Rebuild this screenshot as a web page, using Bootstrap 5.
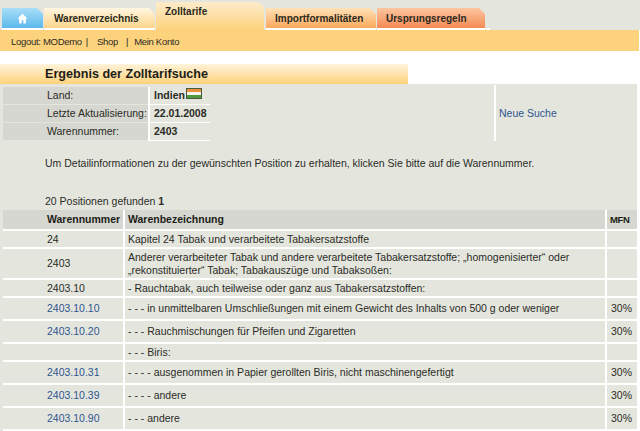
<!DOCTYPE html>
<html lang="de">
<head>
  <meta charset="UTF-8" />
  <meta name="viewport" content="width=device-width, initial-scale=1.0"/>
  <title>Ergebnis der Zolltarifsuche</title>
  <link href="https://cdn.jsdelivr.net/npm/bootstrap@5.3.3/dist/css/bootstrap.min.css" rel="stylesheet" />
  <style>
    html, body { height: 431px; overflow: hidden; }
    body {
      font-family: "Liberation Sans", Arial, sans-serif;
      font-size: 10.5px;
      line-height: 13px;
      color: #2b2b26;
      background-color: #fff;
    }
    a { color: #2f5590; text-decoration: none; }
    .top-area { background: #e4e6de; height: 30px; padding-left: 2px; }
    .tab-item {
      height: 22px;
      border-bottom: 2px solid #fff;
      font-weight: 700;
      font-size: 10px;
      color: #2a2a20;
      display: flex;
      align-items: center;
      padding-left: 9px;
      margin-right: 1px;
      clip-path: polygon(0 0, calc(100% - 6px) 0, 100% 6px, 100% 100%, 0 100%);
    }
    .tab-home { width: 41px; padding: 0; justify-content: center; background: linear-gradient(#a9def8, #5cb9ec); }
    .tab-waren { width: 111px; padding-left: 10px; background: linear-gradient(#fff6e2, #fdd58a); }
    .tab-zoll {
      width: 108px;
      height: 28px;
      margin-right: 2px;
      border: 0;
      align-items: flex-start;
      padding: 3px 0 0 9px;
      background: linear-gradient(#fdeccb, #fdd27c);
      clip-path: none;
      border-top-right-radius: 8px;
    }
    .tab-import { width: 110px; background: linear-gradient(#fee2b8, #fba95c); }
    .tab-ursprung { width: 108px; background: linear-gradient(#fcc6a0, #f48a54); }
    .tab-tail { width: 4px; height: 2px; background: #fff; }
    .sub-nav { background: #fdd27c; height: 21px; padding: 1px 0 0 11px; width: 639px; font-size: 9.5px; letter-spacing: -.3px; }
    .sub-nav a { color: #2b2b26; }
    .nav-pipe-a { margin: 0 9px 0 4px; }
    .nav-pipe-b { margin: 0 6px 0 8px; }
    .white-gap { height: 13px; }
    .title-band {
      width: 408px;
      height: 20px;
      padding-left: 45px;
      font-size: 12.6px;
      font-weight: 700;
      line-height: 20px;
      color: #1d1d18;
      background: linear-gradient(#fff3da, #fdd27c);
    }
    .main-area { background: #e4e6de; width: 637px; height: 347px; padding-top: 1px; }
    .info-block { height: 56px; }
    .info-left { width: 494px; padding-left: 3px; padding-top: 2px; }
    .info-right { border-left: 2px solid #fff; padding-left: 3px; flex: 1; }
    .info-row { display: flex; height: 18px; }
    .info-label { width: 145px; height: 17px; background: #d5d7d0; padding-left: 44px; line-height: 17px; }
    .info-value { width: 62px; height: 18px; border-left: 2px solid #fff; border-bottom: 1px solid #fff; padding-left: 4px; font-weight: 700; line-height: 16px; }
    .flag-mini { vertical-align: 0; margin-left: -2px; }
    .hint-text { margin: 16px 0 0 45px; }
    .count-text { margin: 25px 0 2px 45px; }
    .result-table { width: 634px; margin-left: 3px; table-layout: fixed; border-collapse: separate; border-spacing: 0; }
    .result-table th, .result-table td { padding: 0 3px; border-left: 2px solid #fff; border-bottom: 2px solid #fff; vertical-align: middle; }
    .result-table th:first-child, .result-table td:first-child { border-left: 0; padding-left: 44px; }
    .result-table th { background: #d5d7d0; height: 21px; color: #1d1d18; }
    .result-table th:last-child { font-size: 9.5px; letter-spacing: -.3px; padding-left: 3px; }
    .result-table td:last-child { text-align: right; padding-right: 5px; }
    .result-table .first-row td { height: 18px; }
    .result-table .two-line td { height: 31px; }
    .result-table .plain-row td { height: 18px; }
    .result-table .high-row td { height: 23px; }
  </style>
</head>
<body>

  <div class="top-area d-flex align-items-end">
    <div class="tab-item tab-home">
      <svg width="11" height="11" viewBox="0 0 11 11"><path fill="#fff" d="M5.5 .8 .6 5.6h1.5V10.4h2.5V7.2h1.8v3.2h2.5V5.6h1.5z"/></svg>
    </div>
    <div class="tab-item tab-waren">Warenverzeichnis</div>
    <div class="tab-item tab-zoll">Zolltarife</div>
    <div class="tab-item tab-import">Importformalitäten</div>
    <div class="tab-item tab-ursprung">Ursprungsregeln</div>
    <div class="tab-tail"></div>
  </div>

  <div class="sub-nav d-flex align-items-center">
    <span>Logout: MODemo<span class="nav-pipe-a">|</span><a href="#">Shop</a><span class="nav-pipe-b">|</span><a href="#">Mein Konto</a></span>
  </div>

  <div class="white-gap"></div>
  <div class="title-band">Ergebnis der Zolltarifsuche</div>

  <div class="main-area">
    <div class="info-block d-flex">
      <div class="info-left">
        <div class="info-row">
          <div class="info-label">Land:</div>
          <div class="info-value">Indien
            <svg class="flag-mini" width="16" height="11" viewBox="0 0 16 11"><rect width="16" height="11" fill="#4c5a3c"/><rect x="1" y="1" width="14" height="3" fill="#e8913c"/><rect x="1" y="4" width="14" height="3" fill="#f6f4ea"/><rect x="1" y="7" width="14" height="3" fill="#4f9a3e"/></svg>
          </div>
        </div>
        <div class="info-row">
          <div class="info-label">Letzte Aktualisierung:</div>
          <div class="info-value">22.01.2008</div>
        </div>
        <div class="info-row">
          <div class="info-label">Warennummer:</div>
          <div class="info-value">2403</div>
        </div>
      </div>
      <div class="info-right d-flex align-items-center"><a href="#">Neue Suche</a></div>
    </div>

    <p class="hint-text">Um Detailinformationen zu der gewünschten Position zu erhalten, klicken Sie bitte auf die Warennummer.</p>
    <p class="count-text">20 Positionen gefunden <b>1</b></p>

    <table class="result-table">
      <colgroup><col style="width:120px"><col style="width:482px"><col style="width:32px"></colgroup>
      <thead>
        <tr><th>Warennummer</th><th>Warenbezeichnung</th><th>MFN</th></tr>
      </thead>
      <tbody>
        <tr class="first-row"><td>24</td><td>Kapitel 24 Tabak und verarbeitete Tabakersatzstoffe</td><td></td></tr>
        <tr class="two-line"><td>2403</td><td>Anderer verarbeiteter Tabak und andere verarbeitete Tabakersatzstoffe; „homogenisierter“ oder „rekonstituierter“ Tabak; Tabakauszüge und Tabaksoßen:</td><td></td></tr>
        <tr class="plain-row"><td>2403.10</td><td>- Rauchtabak, auch teilweise oder ganz aus Tabakersatzstoffen:</td><td></td></tr>
        <tr class="high-row"><td><a href="#">2403.10.10</a></td><td>- - - in unmittelbaren Umschließungen mit einem Gewicht des Inhalts von 500 g oder weniger</td><td>30%</td></tr>
        <tr class="high-row"><td><a href="#">2403.10.20</a></td><td>- - - Rauchmischungen für Pfeifen und Zigaretten</td><td>30%</td></tr>
        <tr class="plain-row"><td></td><td>- - - Biris:</td><td></td></tr>
        <tr class="high-row"><td><a href="#">2403.10.31</a></td><td>- - - - ausgenommen in Papier gerollten Biris, nicht maschinengefertigt</td><td>30%</td></tr>
        <tr class="high-row"><td><a href="#">2403.10.39</a></td><td>- - - - andere</td><td>30%</td></tr>
        <tr class="high-row"><td><a href="#">2403.10.90</a></td><td>- - - andere</td><td>30%</td></tr>
      </tbody>
    </table>
  </div>

  <script src="https://cdn.jsdelivr.net/npm/bootstrap@5.3.3/dist/js/bootstrap.bundle.min.js"></script>
</body>
</html>
